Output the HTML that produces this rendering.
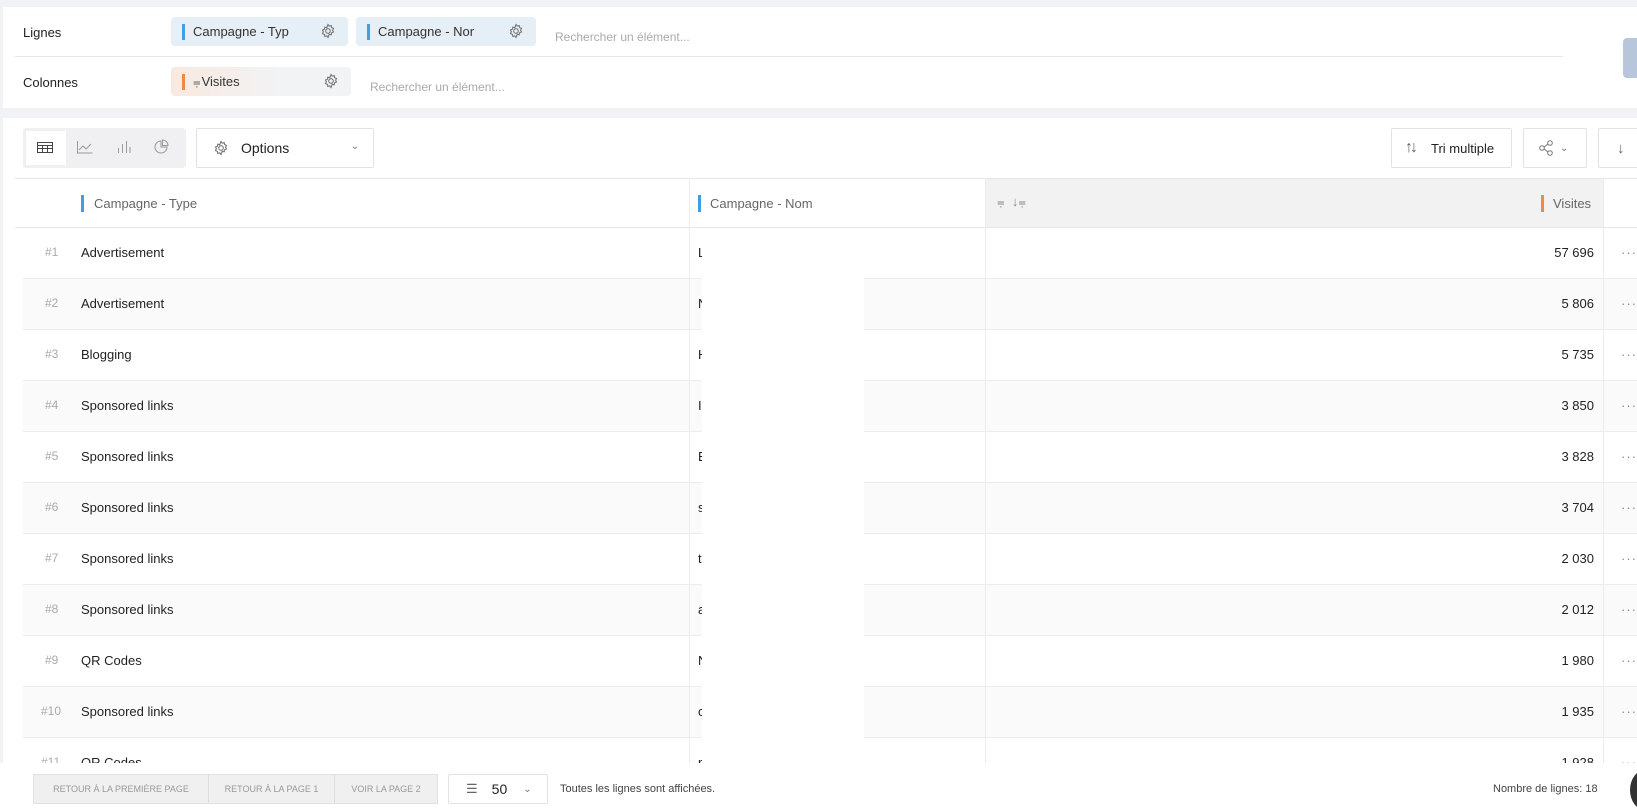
<!DOCTYPE html><html><head><meta charset="utf-8"><style>
*{box-sizing:border-box;margin:0;padding:0}
body{width:1637px;height:809px;overflow:hidden;background:#fff;font-family:"Liberation Sans",sans-serif;font-size:13px;color:#222;position:relative}
.abs{position:absolute}
.chip{position:absolute;border-radius:4px;height:29px;display:flex;align-items:center;padding-left:11px;font-size:13px;color:#333}
.chip .bar{width:3px;height:16px;margin-right:8px}
.gear{position:absolute;right:12px;top:6px;width:16px;height:16px}
.ph{position:absolute;color:#aaa;font-size:12px}
.btn{position:absolute;border:1px solid #e2e2e2;background:#fff;border-radius:2px;display:flex;align-items:center}
.row{position:absolute;left:23px;width:1614px;height:51px;border-bottom:1px solid #ececec}
.row span{position:absolute;top:17px}
.num{left:22px;color:#aaa;font-size:12px}
.typ{left:58px}
.val{right:43px;width:100px;text-align:right}
.dots{left:1598px;color:#888;letter-spacing:1px}
.vl{position:absolute;top:178px;width:1px;height:600px;background:#ececec}
</style></head><body>
<div class="abs" style="left:0;top:0;width:1637px;height:7px;background:#f1f2f6"></div>
<div class="abs" style="left:0;top:0;width:3px;height:809px;background:#f1f2f6"></div>
<div class="abs" style="left:23px;top:25px">Lignes</div>
<div class="chip" style="left:171px;top:17px;width:177px;background:#e6eef6"><div class="bar" style="background:#3ea0e0"></div>Campagne - Typ
<svg class="gear" viewBox="0 0 16 16" fill="none" stroke="#777" stroke-width="1.1"><circle cx="8" cy="8" r="2.3"/><path d="M8 1.5l1.2 1.6 2-.5.4 2 1.9.8-.9 1.8.9 1.8-1.9.8-.4 2-2-.5L8 14.5l-1.2-1.6-2 .5-.4-2-1.9-.8.9-1.8-.9-1.8 1.9-.8.4-2 2 .5z"/></svg></div>
<div class="chip" style="left:356px;top:17px;width:180px;background:#e6eef6"><div class="bar" style="background:#3ea0e0"></div>Campagne - Nor
<svg class="gear" viewBox="0 0 16 16" fill="none" stroke="#777" stroke-width="1.1"><circle cx="8" cy="8" r="2.3"/><path d="M8 1.5l1.2 1.6 2-.5.4 2 1.9.8-.9 1.8.9 1.8-1.9.8-.4 2-2-.5L8 14.5l-1.2-1.6-2 .5-.4-2-1.9-.8.9-1.8-.9-1.8 1.9-.8.4-2 2 .5z"/></svg></div>
<div class="ph" style="left:555px;top:30px">Rechercher un élément...</div>
<div class="abs" style="left:15px;top:56px;width:1548px;height:1px;background:#e6e6e6"></div>
<div class="abs" style="left:23px;top:75px">Colonnes</div>
<div class="chip" style="left:171px;top:67px;width:180px;background:linear-gradient(90deg,#f8e9e0,#f2f3f5 60%)"><div class="bar" style="background:#f08a40"></div><span style="color:#666;margin-right:1px">⩦</span>Visites
<svg class="gear" viewBox="0 0 16 16" fill="none" stroke="#777" stroke-width="1.1"><circle cx="8" cy="8" r="2.3"/><path d="M8 1.5l1.2 1.6 2-.5.4 2 1.9.8-.9 1.8.9 1.8-1.9.8-.4 2-2-.5L8 14.5l-1.2-1.6-2 .5-.4-2-1.9-.8.9-1.8-.9-1.8 1.9-.8.4-2 2 .5z"/></svg></div>
<div class="ph" style="left:370px;top:80px">Rechercher un élément...</div>
<div class="abs" style="left:1623px;top:38px;width:20px;height:40px;background:#b8c6dc;border-radius:4px"></div>
<div class="abs" style="left:0;top:108px;width:1637px;height:10px;background:#f1f2f6"></div>
<div class="abs" style="left:23px;top:128px;width:163px;height:40px;background:#f0f0f2;border-radius:3px"></div>
<div class="abs" style="left:26px;top:131px;width:40px;height:34px;background:#fff"></div>
<svg class="abs" style="left:36px;top:140px" width="18" height="14" viewBox="0 0 18 14" fill="none" stroke="#444"><rect x="1.5" y="2.5" width="15" height="10"/><path d="M1.5 5.5h15M1.5 8.5h15M6.5 5.5v7M11.5 5.5v7"/></svg>
<svg class="abs" style="left:76px;top:140px" width="18" height="14" viewBox="0 0 18 14" fill="none" stroke="#999"><path d="M1.5 1v12h15M3 10l4-4 3 3 5-5"/></svg>
<svg class="abs" style="left:116px;top:140px" width="16" height="14" viewBox="0 0 16 14" fill="none" stroke="#999"><path d="M2.5 13V8M6.5 13V4M10.5 13V1M14 13V7"/></svg>
<svg class="abs" style="left:153px;top:139px" width="16" height="16" viewBox="0 0 16 16" fill="none" stroke="#999"><path d="M8 2a6 6 0 1 0 6 6H8z"/><path d="M9.5 1a5.5 5.5 0 0 1 5.5 5.5H9.5z"/></svg>
<div class="btn" style="left:196px;top:128px;width:178px;height:40px;padding-left:16px"><svg width="16" height="16" viewBox="0 0 16 16" fill="none" stroke="#777" stroke-width="1.1"><circle cx="8" cy="8" r="2.3"/><path d="M8 1.5l1.2 1.6 2-.5.4 2 1.9.8-.9 1.8.9 1.8-1.9.8-.4 2-2-.5L8 14.5l-1.2-1.6-2 .5-.4-2-1.9-.8.9-1.8-.9-1.8 1.9-.8.4-2 2 .5z"/></svg><span style="margin-left:12px;font-size:14px">Options</span><span style="position:absolute;right:14px;top:12px;color:#777;font-size:10px">⌄</span></div>
<div class="btn" style="left:1391px;top:128px;width:121px;height:40px;padding-left:13px"><span style="color:#666;font-size:16px;letter-spacing:-3px">↑↓</span><span style="margin-left:16px">Tri multiple</span></div>
<div class="btn" style="left:1523px;top:128px;width:64px;height:40px;padding-left:14px"><svg width="18" height="16" viewBox="0 0 18 16" fill="none" stroke="#777"><circle cx="4" cy="8" r="2.3"/><circle cx="12" cy="3" r="2.3"/><circle cx="12" cy="13" r="2.3"/><path d="M6 7l4-3M6 9l4 3"/></svg><span style="margin-left:4px;color:#777;font-size:10px">⌄</span></div>
<div class="btn" style="left:1598px;top:128px;width:50px;height:40px;padding-left:18px;color:#666;font-size:15px">↓</div>
<div class="abs" style="left:985px;top:178px;width:618px;height:50px;background:#f2f2f2"></div>
<div class="abs" style="left:15px;top:178px;width:1622px;height:1px;background:#e6e6e6"></div>
<div class="abs" style="left:15px;top:227px;width:1622px;height:1px;background:#e6e6e6"></div>
<div class="abs" style="left:81px;top:195px;width:3px;height:17px;background:#3ea0e0"></div>
<div class="abs" style="left:94px;top:196px;color:#666">Campagne - Type</div>
<div class="abs" style="left:698px;top:195px;width:3px;height:17px;background:#3ea0e0"></div>
<div class="abs" style="left:710px;top:196px;color:#666">Campagne - Nom</div>
<div class="abs" style="left:997px;top:194px;color:#888;font-size:13px">⩦ &nbsp;↓⩦</div>
<div class="abs" style="left:1541px;top:195px;width:3px;height:17px;background:#f08a40"></div>
<div class="abs" style="left:1553px;top:196px;color:#666">Visites</div>
<div class="row" style="top:228px;background:#fff"><span class="num">#1</span><span class="typ">Advertisement</span><span style="left:675px">L</span><span class="val">57 696</span><span class="dots">···</span></div>
<div class="row" style="top:279px;background:#fafafa"><span class="num">#2</span><span class="typ">Advertisement</span><span style="left:675px">N</span><span class="val">5 806</span><span class="dots">···</span></div>
<div class="row" style="top:330px;background:#fff"><span class="num">#3</span><span class="typ">Blogging</span><span style="left:675px">H</span><span class="val">5 735</span><span class="dots">···</span></div>
<div class="row" style="top:381px;background:#fafafa"><span class="num">#4</span><span class="typ">Sponsored links</span><span style="left:675px">I</span><span class="val">3 850</span><span class="dots">···</span></div>
<div class="row" style="top:432px;background:#fff"><span class="num">#5</span><span class="typ">Sponsored links</span><span style="left:675px">E</span><span class="val">3 828</span><span class="dots">···</span></div>
<div class="row" style="top:483px;background:#fafafa"><span class="num">#6</span><span class="typ">Sponsored links</span><span style="left:675px">s</span><span class="val">3 704</span><span class="dots">···</span></div>
<div class="row" style="top:534px;background:#fff"><span class="num">#7</span><span class="typ">Sponsored links</span><span style="left:675px">t</span><span class="val">2 030</span><span class="dots">···</span></div>
<div class="row" style="top:585px;background:#fafafa"><span class="num">#8</span><span class="typ">Sponsored links</span><span style="left:675px">a</span><span class="val">2 012</span><span class="dots">···</span></div>
<div class="row" style="top:636px;background:#fff"><span class="num">#9</span><span class="typ">QR Codes</span><span style="left:675px">N</span><span class="val">1 980</span><span class="dots">···</span></div>
<div class="row" style="top:687px;background:#fafafa"><span class="num" style="left:18px">#10</span><span class="typ">Sponsored links</span><span style="left:675px">c</span><span class="val">1 935</span><span class="dots">···</span></div>
<div class="row" style="top:738px;background:#fff"><span class="num" style="left:18px">#11</span><span class="typ">QR Codes</span><span style="left:675px">r</span><span class="val">1 928</span><span class="dots">···</span></div>
<div class="vl" style="left:689px"></div><div class="vl" style="left:985px"></div><div class="vl" style="left:1603px"></div>
<div class="abs" style="left:702px;top:228px;width:162px;height:540px;background:#fff"></div>
<div class="abs" style="left:0;top:763px;width:1637px;height:46px;background:#fff"></div>
<div class="abs" style="left:33px;top:774px;width:405px;height:30px;background:#f0f0f0;border:1px solid #e0e0e0;display:flex;align-items:center;font-size:9px;color:#999;white-space:nowrap">
<span style="width:175px;text-align:center;border-right:1px solid #ddd;line-height:28px">RETOUR À LA PREMIÈRE PAGE</span><span style="width:126px;text-align:center;border-right:1px solid #ddd;line-height:28px">RETOUR À LA PAGE 1</span><span style="flex:1;text-align:center;line-height:28px">VOIR LA PAGE 2</span></div>
<div class="btn" style="left:448px;top:774px;width:100px;height:30px;padding-left:17px"><span style="color:#666">☰</span><span style="margin-left:14px;font-size:14px">50</span><span style="margin-left:16px;color:#777;font-size:10px">⌄</span></div>
<div class="abs" style="left:560px;top:783px;font-size:11px;color:#444">Toutes les lignes sont affichées.</div>
<div class="abs" style="left:1493px;top:783px;font-size:11px;color:#444">Nombre de lignes: 18</div>
<div class="abs" style="left:1630px;top:770px;width:30px;height:40px;border-radius:50%;background:#333"></div>
</body></html>
